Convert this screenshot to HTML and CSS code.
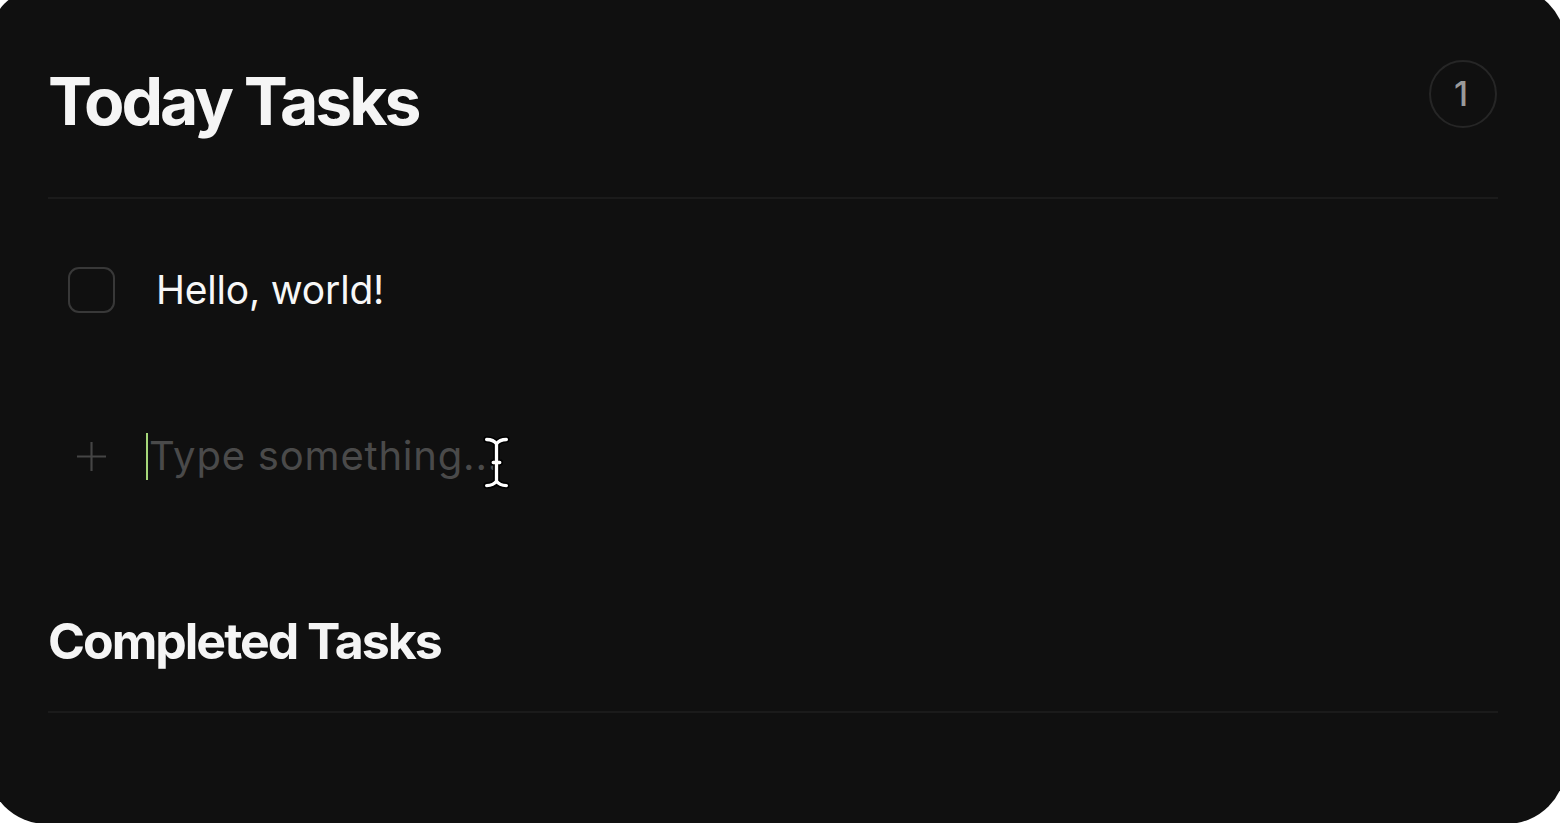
FILE: index.html
```html
<!DOCTYPE html>
<html lang="en">
<head>
<meta charset="utf-8">
<title>Today Tasks</title>
<link rel="stylesheet" href="styles.css">
</head>
<body>
<main class="card">
  <header class="header">
    <h1 class="title">Today Tasks</h1>
    <span class="badge">1</span>
  </header>

  <ul class="tasks">
    <li class="task">
      <span class="checkbox"></span>
      <span class="task-text">Hello, world!</span>
    </li>
  </ul>

  <div class="add-row">
    <svg class="plus" width="32" height="32" viewBox="0 0 32 32" aria-hidden="true">
      <path d="M16 1v30M1 16h30" stroke="currentColor" stroke-width="2.2" fill="none"/>
    </svg>
    <div class="input">
      <span class="caret"></span><span class="placeholder">Type something...</span>
    </div>
    <svg class="ibeam" width="31" height="57" viewBox="0 0 28 52" aria-hidden="true">
      <path d="M5 5c4 0 7 1 9 4c2-3 5-4 9-4M14 9v34M5 47c4 0 7-1 9-4c2 3 5 4 9 4M11 26h6" stroke="#000" stroke-width="6" fill="none" stroke-linecap="round" stroke-linejoin="round"/>
      <path d="M5 5c4 0 7 1 9 4c2-3 5-4 9-4M14 9v34M5 47c4 0 7-1 9-4c2 3 5 4 9 4M11 26h6" stroke="#fff" stroke-width="3" fill="none" stroke-linecap="round" stroke-linejoin="round"/>
    </svg>
  </div>

  <section class="completed">
    <h2 class="completed-title">Completed Tasks</h2>
  </section>
</main>
</body>
</html>
```

FILE: styles.css
```css
html, body {
  margin: 0;
  padding: 0;
  background: #ffffff;
  overflow: hidden;
  height: 100%;
}

body {
  font-family: "Inter", "Liberation Sans", sans-serif;
}

.card {
  box-sizing: border-box;
  margin: -14px 0 0 -13px;
  width: 1579px;
  height: 838px;
  border-radius: 60px;
  background: #101010;
  padding: 74px 68px 0 61px;
  color: #f5f5f5;
}

.header {
  display: flex;
  justify-content: space-between;
  align-items: flex-start;
  padding-bottom: 56px;
  border-bottom: 2px solid #1b1b1b;
}

.title {
  margin: 1px 0 0;
  font-size: 66px;
  line-height: 80px;
  font-weight: 700;
  letter-spacing: -0.045em;
}

.badge {
  box-sizing: border-box;
  width: 68px;
  height: 68px;
  margin-right: 1px;
  border: 2px solid #262626;
  border-radius: 50%;
  display: flex;
  align-items: center;
  justify-content: center;
  color: #9a9a9a;
  font-size: 34px;
  font-weight: 500;
  line-height: 1;
  padding-right: 4px;
}

.tasks {
  list-style: none;
  margin: 0;
  padding: 68px 0 0 20px;
}

.task {
  display: flex;
  align-items: center;
  gap: 41px;
}

.checkbox {
  box-sizing: border-box;
  width: 47px;
  height: 46px;
  border: 2.5px solid #383838;
  border-radius: 11px;
  flex: none;
}

.task-text {
  font-size: 39px;
  line-height: 46px;
  color: #f7f7f7;
  letter-spacing: -0.005em;
}

.add-row {
  position: relative;
  display: flex;
  align-items: center;
  padding: 119px 0 0 28px;
  height: 48px;
}

.plus {
  color: #454545;
  flex: none;
  width: 31px;
  height: 31px;
}

.input {
  display: flex;
  align-items: center;
  margin-left: 39px;
  height: 48px;
}

.caret {
  width: 2px;
  height: 47px;
  background: #a6d77a;
  margin-right: 1px;
}

.placeholder {
  font-size: 40px;
  line-height: 48px;
  color: #4a4a4a;
  letter-spacing: 0.02em;
}

.ibeam {
  position: absolute;
  left: 433px;
  top: 121px;
  width: 31px;
  height: 57px;
}

.completed {
  padding-top: 131px;
}

.completed-title {
  margin: 0;
  font-size: 50px;
  line-height: 60px;
  font-weight: 700;
  letter-spacing: -0.04em;
  padding-bottom: 40px;
  border-bottom: 2px solid #1b1b1b;
}
```
